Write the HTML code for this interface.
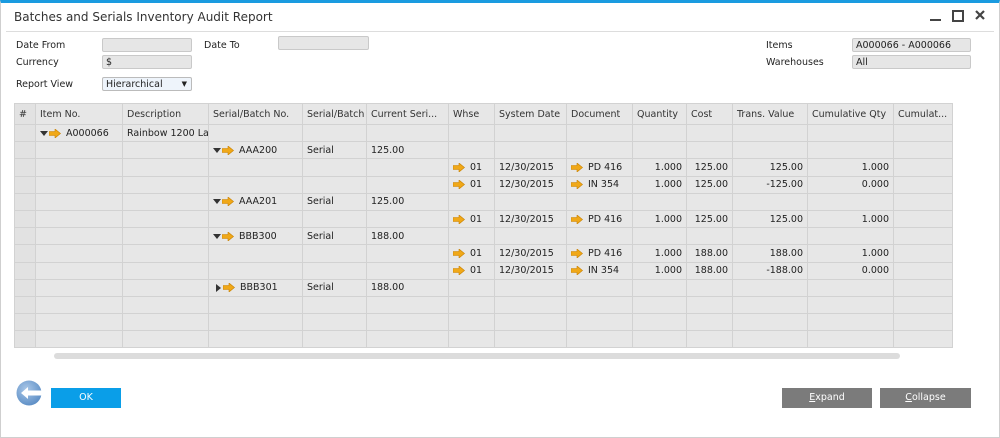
<!DOCTYPE html>
<html><head><meta charset="utf-8"><style>
*{box-sizing:border-box;margin:0;padding:0}
body{width:1000px;height:438px;background:#fff;font-family:"DejaVu Sans","Liberation Sans",sans-serif;font-size:9.5px;color:#222;position:relative;overflow:hidden}
.a{position:absolute}
.win{left:0;top:0;width:1000px;height:438px;border:1px solid #cfcfcf;border-top:3px solid #1a9be0}
.lbl{position:absolute;font-size:9.5px;color:#222}
.inp{position:absolute;background:#e6e6e6;border:1px solid #c9c9c9;border-radius:2px;height:14px;padding-left:3px;font-size:9.5px;line-height:13px}
table{position:absolute;left:14px;top:103px;border-collapse:collapse;table-layout:fixed;width:938px}
td{border:1px solid #d2d2d2;background:#e7e7e7;height:17.2px;padding:0 4px;white-space:nowrap;overflow:hidden;font-size:9.5px}
tr.h td{height:21px;color:#333}
td.r{text-align:right}
td:first-child{background:#e2e2e2}
.t{display:inline-block;width:0;height:0;border-left:4px solid transparent;border-right:4px solid transparent;border-top:5px solid #333;vertical-align:middle;margin-right:1px}
.tr{display:inline-block;width:0;height:0;border-top:4px solid transparent;border-bottom:4px solid transparent;border-left:5px solid #333;vertical-align:middle;margin:0 2px 0 3px}
svg.ar{vertical-align:middle;margin-right:5px}
.btn{position:absolute;height:20px;color:#fff;text-align:center;line-height:20px;font-size:9.5px}
</style></head><body>
<div class="a win"></div>
<div class="a" style="left:14px;top:10px;font-size:12px;color:#333">Batches and Serials Inventory Audit Report</div>
<div class="a" style="left:930px;top:19px;width:11px;height:2px;background:#444"></div>
<div class="a" style="left:952px;top:10px;width:12px;height:12px;border:2px solid #444"></div>
<svg class="a" style="left:975px;top:10px" width="10" height="10"><path d="M1 1L9 9M9 1L1 9" stroke="#444" stroke-width="2.2"/></svg>
<div class="a" style="left:6px;top:31px;width:988px;height:1px;background:#ddd"></div>

<div class="lbl" style="left:16px;top:40px">Date From</div>
<div class="inp" style="left:102px;top:38px;width:90px"></div>
<div class="lbl" style="left:204px;top:40px">Date To</div>
<div class="inp" style="left:278px;top:36px;width:91px"></div>
<div class="lbl" style="left:16px;top:57px">Currency</div>
<div class="inp" style="left:102px;top:55px;width:90px">$</div>
<div class="lbl" style="left:16px;top:79px">Report View</div>
<div class="inp" style="left:102px;top:77px;width:90px;background:#eef4fb;border-color:#bbb">Hierarchical<span style="position:absolute;right:4px;top:0;font-size:7px">▼</span></div>
<div class="lbl" style="left:766px;top:40px">Items</div>
<div class="inp" style="left:852px;top:38px;width:119px">A000066 - A000066</div>
<div class="lbl" style="left:766px;top:57px">Warehouses</div>
<div class="inp" style="left:852px;top:55px;width:119px">All</div>

<svg width="0" height="0" style="position:absolute"><defs><symbol id="ar" viewBox="0 0 12 9"><path d="M0 2.5H6V0L11.5 4.5L6 9V6.5H0Z" fill="#f0a818" stroke="#c88000" stroke-width=".6"/></symbol></defs></svg>

<table>
<colgroup><col style="width:21px"><col style="width:87px"><col style="width:86px"><col style="width:94px"><col style="width:64px"><col style="width:82px"><col style="width:46px"><col style="width:72px"><col style="width:66px"><col style="width:54px"><col style="width:46px"><col style="width:75px"><col style="width:86px"><col style="width:59px"></colgroup>
<tr class="h"><td>#</td><td>Item No.</td><td>Description</td><td>Serial/Batch No.</td><td>Serial/Batch</td><td>Current Seri...</td><td>Whse</td><td>System Date</td><td>Document</td><td>Quantity</td><td>Cost</td><td>Trans. Value</td><td>Cumulative Qty</td><td>Cumulat...</td></tr>
<tr><td></td><td><span class="t"></span><svg class="ar" width="12" height="9"><use href="#ar"/></svg>A000066</td><td>Rainbow 1200 Las</td><td></td><td></td><td></td><td></td><td></td><td></td><td></td><td></td><td></td><td></td><td></td></tr>
<tr><td></td><td></td><td></td><td><span class="t"></span><svg class="ar" width="12" height="9"><use href="#ar"/></svg>AAA200</td><td>Serial</td><td>125.00</td><td></td><td></td><td></td><td></td><td></td><td></td><td></td><td></td></tr>
<tr><td></td><td></td><td></td><td></td><td></td><td></td><td><svg class="ar" width="12" height="9"><use href="#ar"/></svg>01</td><td>12/30/2015</td><td><svg class="ar" width="12" height="9"><use href="#ar"/></svg>PD 416</td><td class="r">1.000</td><td class="r">125.00</td><td class="r">125.00</td><td class="r">1.000</td><td></td></tr>
<tr><td></td><td></td><td></td><td></td><td></td><td></td><td><svg class="ar" width="12" height="9"><use href="#ar"/></svg>01</td><td>12/30/2015</td><td><svg class="ar" width="12" height="9"><use href="#ar"/></svg>IN 354</td><td class="r">1.000</td><td class="r">125.00</td><td class="r">-125.00</td><td class="r">0.000</td><td></td></tr>
<tr><td></td><td></td><td></td><td><span class="t"></span><svg class="ar" width="12" height="9"><use href="#ar"/></svg>AAA201</td><td>Serial</td><td>125.00</td><td></td><td></td><td></td><td></td><td></td><td></td><td></td><td></td></tr>
<tr><td></td><td></td><td></td><td></td><td></td><td></td><td><svg class="ar" width="12" height="9"><use href="#ar"/></svg>01</td><td>12/30/2015</td><td><svg class="ar" width="12" height="9"><use href="#ar"/></svg>PD 416</td><td class="r">1.000</td><td class="r">125.00</td><td class="r">125.00</td><td class="r">1.000</td><td></td></tr>
<tr><td></td><td></td><td></td><td><span class="t"></span><svg class="ar" width="12" height="9"><use href="#ar"/></svg>BBB300</td><td>Serial</td><td>188.00</td><td></td><td></td><td></td><td></td><td></td><td></td><td></td><td></td></tr>
<tr><td></td><td></td><td></td><td></td><td></td><td></td><td><svg class="ar" width="12" height="9"><use href="#ar"/></svg>01</td><td>12/30/2015</td><td><svg class="ar" width="12" height="9"><use href="#ar"/></svg>PD 416</td><td class="r">1.000</td><td class="r">188.00</td><td class="r">188.00</td><td class="r">1.000</td><td></td></tr>
<tr><td></td><td></td><td></td><td></td><td></td><td></td><td><svg class="ar" width="12" height="9"><use href="#ar"/></svg>01</td><td>12/30/2015</td><td><svg class="ar" width="12" height="9"><use href="#ar"/></svg>IN 354</td><td class="r">1.000</td><td class="r">188.00</td><td class="r">-188.00</td><td class="r">0.000</td><td></td></tr>
<tr><td></td><td></td><td></td><td><span class="tr"></span><svg class="ar" width="12" height="9"><use href="#ar"/></svg>BBB301</td><td>Serial</td><td>188.00</td><td></td><td></td><td></td><td></td><td></td><td></td><td></td><td></td></tr>
<tr><td></td><td></td><td></td><td></td><td></td><td></td><td></td><td></td><td></td><td></td><td></td><td></td><td></td><td></td></tr>
<tr><td></td><td></td><td></td><td></td><td></td><td></td><td></td><td></td><td></td><td></td><td></td><td></td><td></td><td></td></tr>
<tr><td></td><td></td><td></td><td></td><td></td><td></td><td></td><td></td><td></td><td></td><td></td><td></td><td></td><td></td></tr>
</table>
<div class="a" style="left:54px;top:353px;width:846px;height:6px;background:#dcdcdc;border-radius:3px"></div>

<svg class="a" style="left:15px;top:380px" width="30" height="26" viewBox="0 0 30 26"><defs><radialGradient id="g" cx=".4" cy=".35" r=".7"><stop offset="0" stop-color="#a9c7e8"/><stop offset="1" stop-color="#5a8cc4"/></radialGradient></defs><circle cx="14" cy="13" r="12.5" fill="url(#g)"/><path d="M6 13L13 7V10.5H27V15.5H13V19Z" fill="#fff"/></svg>
<div class="btn" style="left:51px;top:388px;width:70px;background:#0a9ee8">OK</div>
<div class="btn" style="left:782px;top:388px;width:90px;background:#7b7b7b"><u>E</u>xpand</div>
<div class="btn" style="left:880px;top:388px;width:91px;background:#7b7b7b"><u>C</u>ollapse</div>
</body></html>
